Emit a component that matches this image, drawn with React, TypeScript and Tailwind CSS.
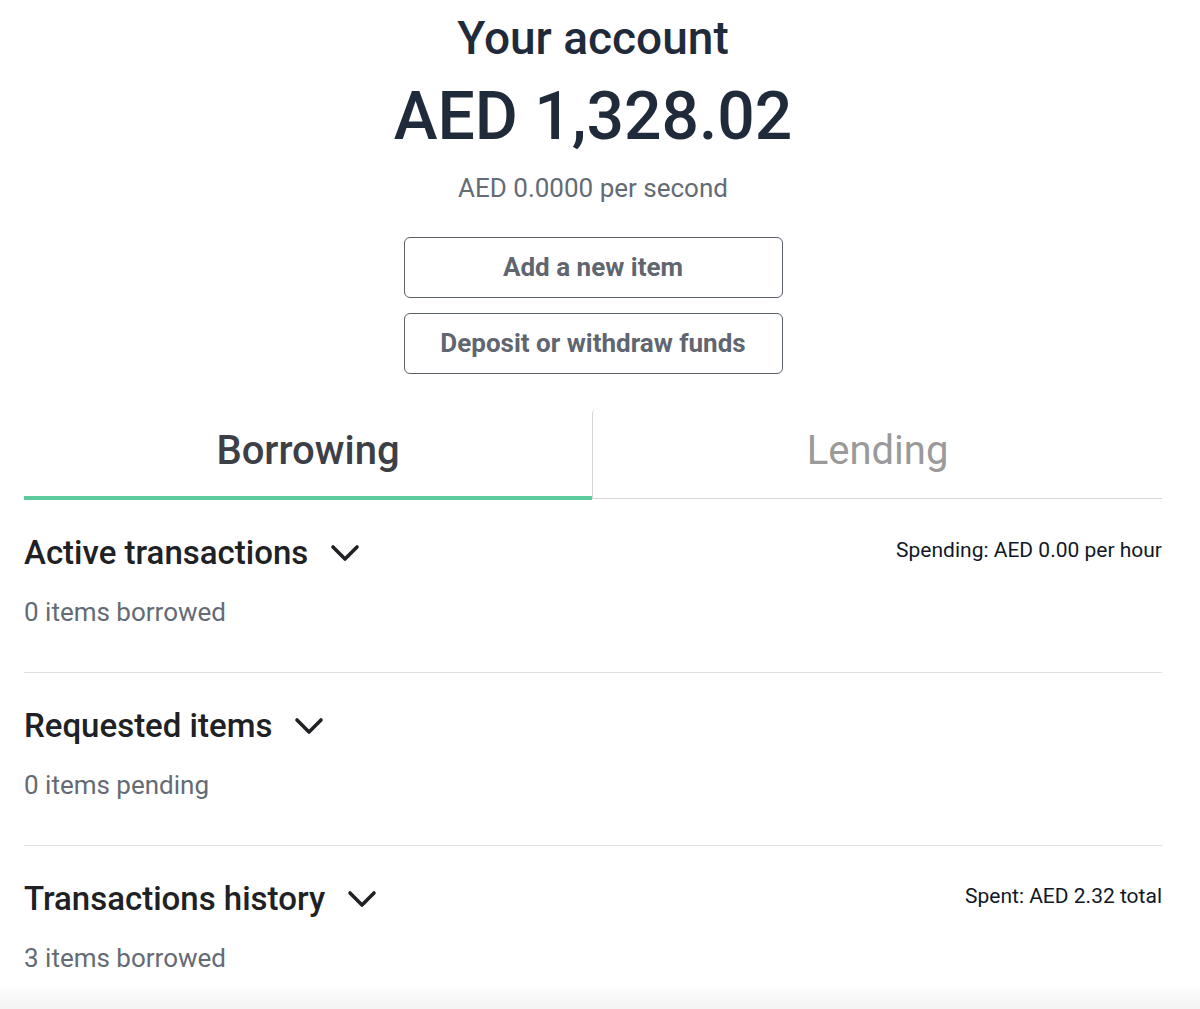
import React from 'react';

const Chevron: React.FC = () => (
  <svg width="30" height="20" viewBox="0 0 30 20" fill="none" className="shrink-0">
    <polyline
      points="3,4 15,16 27,4"
      stroke="#202124"
      strokeWidth="3.6"
      strokeLinecap="round"
      strokeLinejoin="round"
    />
  </svg>
);

interface SectionProps {
  title: string;
  subtitle: string;
  aside?: string;
  last?: boolean;
}

const Section: React.FC<SectionProps> = ({ title, subtitle, aside, last }) => (
  <div className={last ? 'pt-[33px] pb-[30px]' : 'pt-[33px] pb-[44px] border-b border-[#e0e0e0]'}>
    <div className="flex justify-between items-start">
      <div className="flex items-center gap-[22px]">
        <h3 className="text-[33px] leading-[40px] font-medium text-[#202124]">{title}</h3>
        <Chevron />
      </div>
      {aside && <p className="mt-[3px] text-[21px] leading-[28px] text-[#111827]">{aside}</p>}
    </div>
    <p className="mt-[23px] text-[26px] leading-[32px] text-[#646b75]">{subtitle}</p>
  </div>
);

const App: React.FC = () => {
  return (
    <div
      className="relative w-full h-[1009px] overflow-hidden bg-white"
      style={{ fontFamily: 'Roboto, "Noto Sans", Arial, sans-serif' }}
    >
      <div className="ml-[24px] w-[1138px]">
        {/* Account header */}
        <div className="flex flex-col items-center text-center">
          <h1 className="mt-[11px] text-[46px] leading-[54px] font-medium text-[#1f2a3a]">Your account</h1>
          <h2 className="mt-[13px] text-[66px] leading-[78px] font-medium text-[#1f2a3a]">AED 1,328.02</h2>
          <p className="mt-[16px] text-[26px] leading-[32px] text-[#646b75]">AED 0.0000 per second</p>

          <button className="mt-[33px] w-[379px] h-[61px] border border-[#5a6069] rounded-[6px] text-[26px] font-bold text-[#5f6670]">
            Add a new item
          </button>
          <button className="mt-[15px] w-[379px] h-[61px] border border-[#5a6069] rounded-[6px] text-[26px] font-bold text-[#5f6670]">
            Deposit or withdraw funds
          </button>
        </div>

        {/* Tabs */}
        <div className="mt-[36px] grid grid-cols-[568px_1fr]">
          <div className="h-[90px] pt-[17px] border-b-4 border-[#5ccb9b] text-center">
            <span className="text-[40px] leading-[48px] font-medium text-[#3c4046]">Borrowing</span>
          </div>
          <div className="h-[89px] pt-[17px] border-l border-b border-[#d6d6d6] rounded-tl-[4px] text-center">
            <span className="text-[40px] leading-[48px] text-[#9a9a9a]">Lending</span>
          </div>
        </div>

        {/* Sections */}
        <Section title="Active transactions" subtitle="0 items borrowed" aside="Spending: AED 0.00 per hour" />
        <Section title="Requested items" subtitle="0 items pending" />
        <Section title="Transactions history" subtitle="3 items borrowed" aside="Spent: AED 2.32 total" last />
      </div>

      <div className="absolute bottom-0 left-0 right-0 h-[26px] bg-gradient-to-b from-white to-[#f3f3f3]" />
    </div>
  );
};

export default App;
